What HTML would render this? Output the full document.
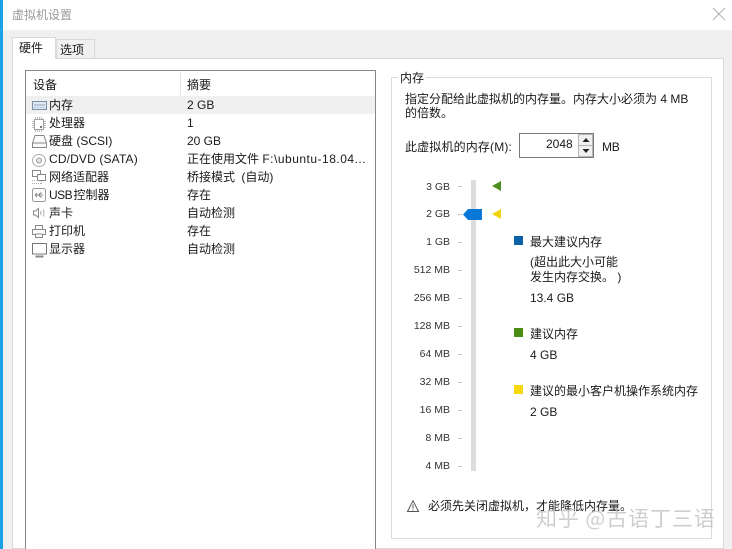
<!DOCTYPE html>
<html><head><meta charset="utf-8">
<style>
*{box-sizing:border-box}
html,body{margin:0;padding:0;background:#fff}
body{width:732px;height:549px;position:relative;overflow:hidden;font-family:"Liberation Sans","Noto Sans CJK SC",sans-serif;font-size:12px;color:#1a1a1a}
.a{position:absolute;white-space:nowrap;line-height:16px}
.b{position:absolute}
.n{font-size:10.500px;color:#333}
svg{position:absolute;overflow:visible}
</style></head><body>
<div class="b" style="left:3px;top:30px;width:729px;height:519px;background:#f0f0f0"></div>
<div class="b" style="left:0;top:0;width:3px;height:549px;background:#1ba1e6"></div>
<div class="b" style="left:3px;top:0;width:729px;height:30px;background:#fff"></div>
<div class="a" style="left:12px;top:7px;color:#9a9a9a">虚拟机设置</div>
<svg style="left:713px;top:8px" width="12" height="12"><path d="M0 0L12 12M12 0L0 12" stroke="#b0b0b0" stroke-width="1"/></svg>

<div class="b" style="left:12px;top:58px;width:712px;height:491px;background:#fff;border:1px solid #d9d9d9"></div>
<div class="b" style="left:56px;top:39px;width:39px;height:20px;background:#f0f0f0;border:1px solid #d9d9d9"></div>
<div class="a" style="left:60px;top:42px">选项</div>
<div class="b" style="left:12px;top:37px;width:44px;height:22px;background:#fff;border:1px solid #d9d9d9;border-bottom:0"></div>
<div class="a" style="left:19px;top:40px">硬件</div>

<div class="b" style="left:25px;top:70px;width:351px;height:479px;background:#fff;border:1px solid #828790;border-bottom:0"></div>
<div class="b" style="left:180px;top:72px;width:1px;height:23px;background:#e5e5e5"></div>
<div class="a" style="left:33px;top:77px">设备</div>
<div class="a" style="left:187px;top:77px">摘要</div>
<div class="b" style="left:26px;top:96px;width:349px;height:18px;background:#f0f0f0"></div>

<svg style="left:32px;top:101px" width="15" height="9"><rect x=".5" y=".5" width="14" height="8" fill="#dfe8f2" stroke="#7b8fa6"/><path d="M2 4h11" stroke="#8fa6bf"/><path d="M2 6.500h11" stroke="#b5c4d4" stroke-dasharray="2 1"/></svg>
<svg style="left:32px;top:117px" width="14" height="15"><rect x="2.500" y="2.500" width="9" height="10" fill="#fff" stroke="#999"/><path d="M3.500 0v2.500M5.500 0v2.500M7.500 0v2.500M9.500 0v2.500M3.500 12.500v2.500M5.500 12.500v2.500M7.500 12.500v2.500M9.500 12.500v2.500M0 4.500h2.500M0 6.500h2.500M0 8.500h2.500M0 10.500h2.500M11.500 4.500h2.500M11.500 6.500h2.500M11.500 8.500h2.500M11.500 10.500h2.500" stroke="#bbb"/><rect x="8" y="9" width="2" height="2" fill="#777"/></svg>
<svg style="left:32px;top:135px" width="15" height="13"><path d="M.5 8L3 .5h9l2.500 7.500v4.500H.5zM.5 8h14" fill="#fafafa" stroke="#888"/></svg>
<svg style="left:32px;top:154px" width="14" height="13"><ellipse cx="7" cy="6.500" rx="6.500" ry="6" fill="#fff" stroke="#aaa"/><circle cx="7" cy="6.500" r="2.500" fill="#e4e4e4" stroke="#999"/></svg>
<svg style="left:32px;top:170px" width="14" height="15"><rect x=".5" y=".5" width="8" height="6" fill="#fff" stroke="#888"/><rect x="5.500" y="4.500" width="8" height="6" fill="#fff" stroke="#888"/><path d="M9.500 11v3M0 10.500h4M0 13.500h9" stroke="#aaa" stroke-dasharray="1 1"/></svg>
<svg style="left:32px;top:188px" width="14" height="14"><rect x=".5" y=".5" width="13" height="13" rx="2" fill="#fff" stroke="#999"/><path d="M3 7h8M3 7l2-2M3 7l2 2M6.500 7l2-2h1.500M6.500 7l2 2h1.500" fill="none" stroke="#888"/></svg>
<svg style="left:33px;top:208px" width="12" height="10"><path d="M.5 3h2L5.500.5v9L2.500 7h-2z" fill="#fff" stroke="#888"/><path d="M7.500 3q1 2 0 4M10 1.500q2 3.500 0 7" fill="none" stroke="#aaa"/></svg>
<svg style="left:32px;top:225px" width="14" height="13"><path d="M3.500 4.500V.5h7v4M.5 4.500h13v5h-3v3h-7v-3h-3z" fill="#fff" stroke="#888"/><path d="M3.500 9h7" stroke="#888"/></svg>
<svg style="left:32px;top:243px" width="15" height="15"><rect x=".5" y=".5" width="14" height="10.500" fill="#fff" stroke="#777"/><path d="M3.500 13.500h8" stroke="#888" stroke-width="2"/></svg>

<div class="a" style="left:49px;top:97px">内存</div><div class="a" style="left:187px;top:97px">2 GB</div>
<div class="a" style="left:49px;top:115px">处理器</div><div class="a" style="left:187px;top:115px">1</div>
<div class="a" style="left:49px;top:133px">硬盘 (SCSI)</div><div class="a" style="left:187px;top:133px">20 GB</div>
<div class="a" style="left:49px;top:151px;letter-spacing:.15px">CD/DVD (SATA)</div><div class="a" style="left:187px;top:151px">正在使用文件 <span style="letter-spacing:.5px">F:\ubuntu-18.04...</span></div>
<div class="a" style="left:49px;top:169px">网络适配器</div><div class="a" style="left:187px;top:169px;word-spacing:3px">桥接模式 (自动)</div>
<div class="a" style="left:49px;top:187px;word-spacing:-2px"><span style="letter-spacing:-.5px">USB</span> 控制器</div><div class="a" style="left:187px;top:187px">存在</div>
<div class="a" style="left:49px;top:205px">声卡</div><div class="a" style="left:187px;top:205px">自动检测</div>
<div class="a" style="left:49px;top:223px">打印机</div><div class="a" style="left:187px;top:223px">存在</div>
<div class="a" style="left:49px;top:241px">显示器</div><div class="a" style="left:187px;top:241px">自动检测</div>

<div class="b" style="left:391px;top:77px;width:321px;height:462px;border:1px solid #dcdcdc"></div>
<div class="a" style="left:398px;top:70px;background:#fff;padding:0 2px">内存</div>
<div class="a" style="left:405px;top:92px;line-height:14px">指定分配给此虚拟机的内存量。内存大小必须为 4 MB<br>的倍数。</div>
<div class="a" style="left:405px;top:139px;letter-spacing:.15px">此虚拟机的内存(M):</div>
<div class="b" style="left:519px;top:133px;width:75px;height:25px;border:1px solid #7a7a7a;background:#fff"></div>
<div class="a" style="left:546px;top:136px">2048</div>
<div class="b" style="left:578px;top:134px;width:15px;height:23px;background:#f0f0f0;border:1px solid #b5b5b5"></div>
<div class="b" style="left:578px;top:145px;width:15px;height:1px;background:#b5b5b5"></div>
<svg style="left:582px;top:138px" width="8" height="16"><path d="M4 0L7.500 4H.5zM.5 11h7L4 15z" fill="#222"/></svg>
<div class="a" style="left:602px;top:139px;letter-spacing:-.3px">MB</div>

<div class="b" style="left:471px;top:180px;width:5px;height:291px;background:#dcdcdc"></div>
<div class="a n" style="right:282px;top:179px">3 GB</div>
<div class="a n" style="right:282px;top:206px">2 GB</div>
<div class="a n" style="right:282px;top:234px">1 GB</div>
<div class="a n" style="right:282px;top:262px">512 MB</div>
<div class="a n" style="right:282px;top:290px">256 MB</div>
<div class="a n" style="right:282px;top:318px">128 MB</div>
<div class="a n" style="right:282px;top:346px">64 MB</div>
<div class="a n" style="right:282px;top:374px">32 MB</div>
<div class="a n" style="right:282px;top:402px">16 MB</div>
<div class="a n" style="right:282px;top:430px">8 MB</div>
<div class="a n" style="right:282px;top:458px">4 MB</div>
<svg style="left:457px;top:186px" width="8" height="281"><path d="M1 .5h4M1 28.500h4M1 56.500h4M1 84.500h4M1 112.500h4M1 140.500h4M1 168.500h4M1 196.500h4M1 224.500h4M1 252.500h4M1 280.500h4" stroke="#c4c4c4"/></svg>
<svg style="left:463px;top:209px" width="20" height="11"><path d="M0 5.500L5 0h14v11H5z" fill="#0a78d7"/></svg>
<svg style="left:492px;top:181px" width="9" height="10"><path d="M0 5L9 0v10z" fill="#4f8c1e"/></svg>
<svg style="left:492px;top:209px" width="9" height="10"><path d="M0 5L9 0v10z" fill="#f2d40c"/></svg>

<div class="b" style="left:514px;top:236px;width:9px;height:9px;background:#0b62a8"></div>
<div class="a" style="left:530px;top:234px">最大建议内存</div>
<div class="a" style="left:530px;top:255px;line-height:15px">(超出此大小可能<br>发生内存交换。 )</div>
<div class="a" style="left:530px;top:290px">13.4 GB</div>
<div class="b" style="left:514px;top:328px;width:9px;height:9px;background:#4b8e14"></div>
<div class="a" style="left:530px;top:326px">建议内存</div>
<div class="a" style="left:530px;top:347px">4 GB</div>
<div class="b" style="left:514px;top:385px;width:9px;height:9px;background:#f7d80e"></div>
<div class="a" style="left:530px;top:383px">建议的最小客户机操作系统内存</div>
<div class="a" style="left:530px;top:404px">2 GB</div>

<svg style="left:407px;top:500px" width="12" height="12"><path d="M6 .7L11.500 11.500H.5z" fill="#fff" stroke="#555"/><path d="M6 4.500v4M6 9.500v1" stroke="#555"/></svg>
<div class="a" style="left:428px;top:498px">必须先关闭虚拟机，才能降低内存量。</div>
<div class="a" style="left:536px;top:505px;font-size:21px;line-height:26px;letter-spacing:.9px;color:rgba(190,190,190,.75);font-family:'Noto Sans CJK SC',sans-serif">知乎 @古语丁三语</div>
</body></html>
